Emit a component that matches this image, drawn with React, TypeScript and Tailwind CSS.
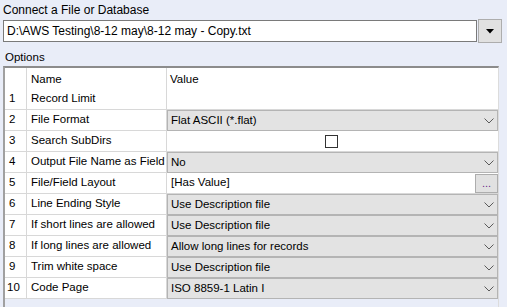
import React from "react";

type Row = { n: number; name: string; kind: "empty" | "combo" | "check" | "button"; value?: string };

const rows: Row[] = [
  { n: 1, name: "Record Limit", kind: "empty" },
  { n: 2, name: "File Format", kind: "combo", value: "Flat ASCII (*.flat)" },
  { n: 3, name: "Search SubDirs", kind: "check" },
  { n: 4, name: "Output File Name as Field", kind: "combo", value: "No" },
  { n: 5, name: "File/Field Layout", kind: "button", value: "[Has Value]" },
  { n: 6, name: "Line Ending Style", kind: "combo", value: "Use Description file" },
  { n: 7, name: "If short lines are allowed", kind: "combo", value: "Use Description file" },
  { n: 8, name: "If long lines are allowed", kind: "combo", value: "Allow long lines for records" },
  { n: 9, name: "Trim white space", kind: "combo", value: "Use Description file" },
  { n: 10, name: "Code Page", kind: "combo", value: "ISO 8859-1 Latin I" },
];

function Chevron() {
  return (
    <svg width="10" height="6" viewBox="0 0 10 6" className="shrink-0">
      <path d="M0.5 0.5 L5 5 L9.5 0.5" fill="none" stroke="#5a5a5a" strokeWidth="1" />
    </svg>
  );
}

export default function App() {
  return (
    <div
      className="w-[507px] h-[307px] bg-[#e9edf8] overflow-hidden text-[11.5px] text-black leading-none"
      style={{ fontFamily: '"Liberation Sans", Arial, sans-serif' }}
    >
      <div className="pl-[3px] pt-[4px] h-[19px] text-[12px]">Connect a File or Database</div>
      <div className="flex pl-[3px] h-[24px] items-start">
        <div className="w-[474px] h-[22px] mt-[1px] bg-white border border-[#7a7a7a] flex items-center pl-[3px] text-[12px]">
          D:\AWS Testing\8-12 may\8-12 may - Copy.txt
        </div>
        <div className="ml-[1px] w-[24px] h-[24px] bg-[#e1e1e1] border border-[#adadad] flex items-center justify-center">
          <svg width="8" height="5" viewBox="0 0 8 5">
            <path d="M0 0 H8 L4 4.5 Z" fill="#000" />
          </svg>
        </div>
      </div>
      <div className="pl-[5px] pt-[9px] h-[23px]">Options</div>
      <div className="ml-[3px] w-[496px] h-[260px] border-l-2 border-t-2 border-l-[#a0a0a0] border-t-[#8c8c8c] border-r border-r-[#dcdcdc]">
        <div className="flex h-[21px] bg-white">
          <div className="w-[22px] border-r border-[#d8d8d8]" />
          <div className="w-[140px] border-r border-[#d8d8d8] pl-[4px] pt-[6px]">Name</div>
          <div className="flex-1 pl-[3px] pt-[6px]">Value</div>
        </div>
        {rows.map((r) => (
          <div key={r.n} className="flex h-[21px] bg-white">
            <div className="w-[22px] border-r border-b border-[#d8d8d8] flex items-center pl-[4px]">
              {r.n === 10 ? <span className="-ml-[2px]">10</span> : r.n}
            </div>
            <div className="w-[140px] border-r border-b border-[#d8d8d8] flex items-center pl-[4px] whitespace-nowrap">
              {r.name}
            </div>
            {r.kind === "combo" && (
              <div className="flex-1 bg-[#e3e3e3] border border-[#b4b4b4] flex items-center pl-[3px] pr-[3px] whitespace-nowrap">
                <span className="flex-1">{r.value}</span>
                <Chevron />
              </div>
            )}
            {r.kind === "empty" && <div className="flex-1 border-b border-[#d8d8d8]" />}
            {r.kind === "check" && (
              <div className="flex-1 border-b border-[#d8d8d8] flex items-center pl-[158px]">
                <div className="w-[13px] h-[13px] border border-[#333333] bg-white" />
              </div>
            )}
            {r.kind === "button" && (
              <div className="flex-1 border-b border-[#d8d8d8] flex items-center pl-[4px] pr-0">
                <span className="flex-1">{r.value}</span>
                <div className="w-[23px] h-[19px] bg-[#e1e1e1] border border-[#adadad] flex items-end justify-center pb-[3px] text-[#6a2a8a] text-[11px]">
                  ...
                </div>
              </div>
            )}
          </div>
        ))}
      </div>
    </div>
  );
}
